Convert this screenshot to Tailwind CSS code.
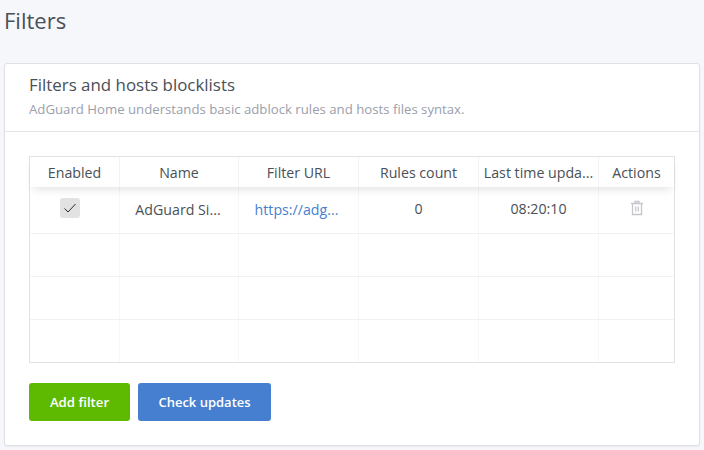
<!DOCTYPE html>
<html lang="en">
<head>
  <meta charset="UTF-8" />
  <title>Filters</title>
  <script src="https://cdn.jsdelivr.net/npm/@tailwindcss/browser@4"></script>
</head>
<body class="bg-[#f5f7fb] text-[#495057] font-['Open_Sans',sans-serif] h-[450px] overflow-hidden">
  <h1 class="pl-1 pt-[5px] h-[63px] text-[22px] leading-[30px] font-normal">Filters</h1>

  <div class="ml-1 w-[696px] h-[383px] bg-white border border-[#dfe1e5] rounded-[3px] shadow-[0_1px_2px_rgba(0,0,0,0.05)]">
    <div class="h-[68px] pl-6 pt-[10px] border-b border-[#e2e4e8]">
      <h2 class="text-[16.9px] leading-[22px] font-normal">Filters and hosts blocklists</h2>
      <p class="mt-1 text-[13.2px] leading-[18px] text-[#9aa0ac]">AdGuard Home understands basic adblock rules and hosts files syntax.</p>
    </div>

    <div class="pt-6 px-6">
      <div class="w-[646px] h-[207px] border border-[#e0e2e6] text-[14.2px]">
        <!-- header -->
        <div class="relative z-10 flex h-[30px] bg-white shadow-[0_5px_10px_-3px_rgba(0,0,0,0.12)] text-center leading-[31px]">
          <div class="w-[90px] shrink-0 border-r border-[#f1f2f4]">Enabled</div>
          <div class="w-[119px] shrink-0 border-r border-[#f1f2f4]">Name</div>
          <div class="w-[120px] shrink-0 border-r border-[#f1f2f4]">Filter URL</div>
          <div class="w-[120px] shrink-0 border-r border-[#f1f2f4]">Rules count</div>
          <div class="w-[120px] shrink-0 border-r border-[#f1f2f4] whitespace-nowrap">Last time upda...</div>
          <div class="flex-1">Actions</div>
        </div>
        <!-- first row -->
        <div class="flex h-[47px] border-b border-[#f1f2f4] text-center items-stretch">
          <div class="w-[90px] shrink-0 border-r border-[#f7f7f8] flex justify-center pt-[11px]">
            <span class="w-5 h-5 mr-[10px] rounded-[3px] bg-[#e2e2e2] flex items-center justify-center">
              <svg width="14" height="14" viewBox="0 0 14 14" fill="none" stroke="#2a2a2a" stroke-width="1"><path d="M1.5 7.5l3.5 3.5 7.5-8"/></svg>
            </span>
          </div>
          <div class="w-[119px] shrink-0 border-r border-[#f7f7f8] leading-[45px] pr-[2px]">AdGuard Si...</div>
          <div class="w-[120px] shrink-0 border-r border-[#f7f7f8] leading-[45px] pr-1 text-[#467fcf]">https://adg...</div>
          <div class="w-[120px] shrink-0 border-r border-[#f7f7f8] leading-[43px]">0</div>
          <div class="w-[120px] shrink-0 border-r border-[#f7f7f8] leading-[43px]">08:20:10</div>
          <div class="flex-1 flex justify-center pt-[13px]">
            <svg width="14" height="16" viewBox="0 0 14 16" fill="none" stroke="#c4c6c9" stroke-width="1.3"><path d="M1 3.5h12M5 3.5V1.5h4v2M2.5 3.5v11h9v-11M5.7 6.5v5M8.3 6.5v5"/></svg>
          </div>
        </div>
        <!-- empty rows -->
        <div class="flex h-[43px] border-b border-[#f1f2f4]">
          <div class="w-[90px] shrink-0 border-r border-[#f7f7f8]"></div><div class="w-[119px] shrink-0 border-r border-[#f7f7f8]"></div><div class="w-[120px] shrink-0 border-r border-[#f7f7f8]"></div><div class="w-[120px] shrink-0 border-r border-[#f7f7f8]"></div><div class="w-[120px] shrink-0 border-r border-[#f7f7f8]"></div>
        </div>
        <div class="flex h-[43px] border-b border-[#f1f2f4]">
          <div class="w-[90px] shrink-0 border-r border-[#f7f7f8]"></div><div class="w-[119px] shrink-0 border-r border-[#f7f7f8]"></div><div class="w-[120px] shrink-0 border-r border-[#f7f7f8]"></div><div class="w-[120px] shrink-0 border-r border-[#f7f7f8]"></div><div class="w-[120px] shrink-0 border-r border-[#f7f7f8]"></div>
        </div>
        <div class="flex h-[42px]">
          <div class="w-[90px] shrink-0 border-r border-[#f7f7f8]"></div><div class="w-[119px] shrink-0 border-r border-[#f7f7f8]"></div><div class="w-[120px] shrink-0 border-r border-[#f7f7f8]"></div><div class="w-[120px] shrink-0 border-r border-[#f7f7f8]"></div><div class="w-[120px] shrink-0 border-r border-[#f7f7f8]"></div>
        </div>
      </div>

      <div class="flex gap-2 mt-5">
        <button class="w-[101px] h-[38px] pt-px rounded-[3px] bg-[#5eba00] text-white text-[13.2px] font-semibold">Add filter</button>
        <button class="w-[133px] h-[38px] pt-px rounded-[3px] bg-[#467fcf] text-white text-[13px] font-semibold">Check updates</button>
      </div>
    </div>
  </div>
</body>
</html>
